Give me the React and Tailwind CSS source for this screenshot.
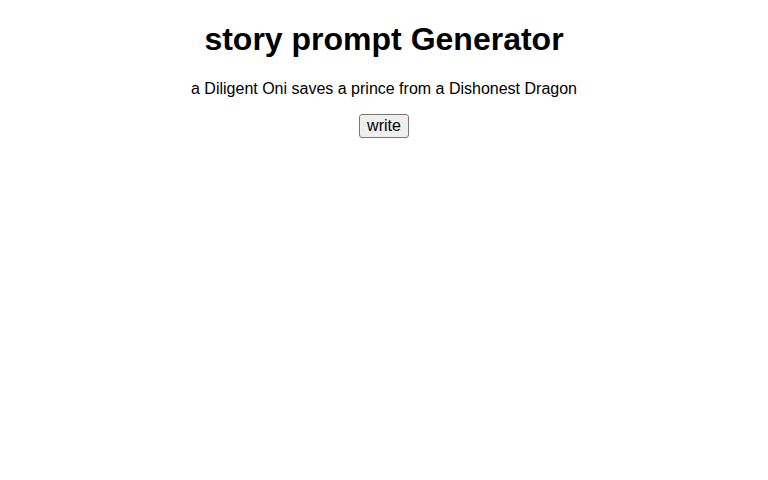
import React, { useState } from 'react';

const heroes = ['Diligent Oni', 'Brave Knight', 'Clever Fox', 'Loyal Golem'];
const villains = ['Dishonest Dragon', 'Greedy Troll', 'Wicked Witch', 'Sly Goblin'];

const App = () => {
  const [prompt, setPrompt] = useState('a Diligent Oni saves a prince from a Dishonest Dragon');

  const write = () => {
    const h = heroes[Math.floor(Math.random() * heroes.length)];
    const v = villains[Math.floor(Math.random() * villains.length)];
    setPrompt(`a ${h} saves a prince from a ${v}`);
  };

  return (
    <div className="bg-white text-center text-black font-['Liberation_Sans',Arial,sans-serif]">
      <h1 className="pt-[21px] pb-[21px] text-[32px] leading-[37px] font-bold">story prompt Generator</h1>
      <p className="pt-px text-base leading-[18px]">{prompt}</p>
      <button
        type="button"
        onClick={write}
        className="mt-4 rounded-[3px] border border-[#767676] bg-[#efefef] px-[7px] pt-px pb-[2px] text-base leading-[19px] text-black"
      >
        write
      </button>
    </div>
  );
};

export default App;
